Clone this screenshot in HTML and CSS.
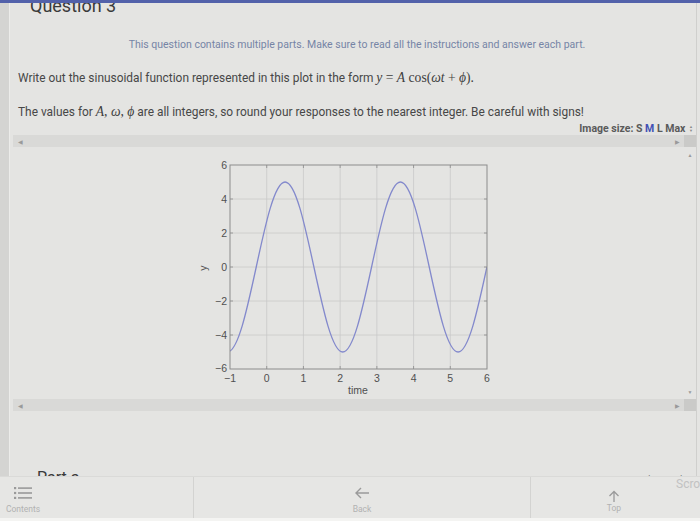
FILE: index.html
```html
<!DOCTYPE html>
<html>
<head>
<meta charset="utf-8">
<link rel="stylesheet" href="styles.css">
</head>
<body>
<div class="screen">
  <div class="topbar"></div>
  <div class="page">
    <div class="leftstrip"></div>
    <div class="main">
      <h1 class="qtitle">Question 3</h1>
      <p class="note">This question contains multiple parts. Make sure to read all the instructions and answer each part.</p>
      <p class="text t1">Write out the sinusoidal function represented in this plot in the form <span class="math"><i>y</i> = <i>A</i> cos(<i>ωt</i> + <i>ϕ</i>).</span></p>
      <p class="text t2">The values for <span class="math"><i>A</i>, <i>ω</i>, <i>ϕ</i></span> are all integers, so round your responses to the nearest integer. Be careful with signs!</p>
      <div class="imgsize">Image size: <b>S</b> <b class="cur">M</b> <b>L</b> <b>Max</b> <span class="spin"><span>▲</span><span>▼</span></span></div>
      <div class="hscroll"><span class="arr">◀</span><span class="track"></span><span class="arr">▶</span><span class="corner"></span></div>
      <div class="figbox">
        <div class="figarea">
          <svg class="plot" width="320" height="248" viewBox="0 0 320 248">
            <defs><clipPath id="clip"><rect x="50" y="15" width="257" height="204"/></clipPath></defs>
            <g class="grid">
              <line x1="86.71" y1="15" x2="86.71" y2="219"/>
              <line x1="123.43" y1="15" x2="123.43" y2="219"/>
              <line x1="160.14" y1="15" x2="160.14" y2="219"/>
              <line x1="196.86" y1="15" x2="196.86" y2="219"/>
              <line x1="233.57" y1="15" x2="233.57" y2="219"/>
              <line x1="270.29" y1="15" x2="270.29" y2="219"/>
              <line x1="50" y1="49" x2="307" y2="49"/>
              <line x1="50" y1="83" x2="307" y2="83"/>
              <line x1="50" y1="117" x2="307" y2="117"/>
              <line x1="50" y1="151" x2="307" y2="151"/>
              <line x1="50" y1="185" x2="307" y2="185"/>
            </g>
            <path class="curve" clip-path="url(#clip)" d="M47.4,202 c10.436,0 19.431,-41.45 28.835,-85 c9.404,-43.55 18.399,-85 28.835,-85 c10.436,0 19.431,41.45 28.835,85 c9.404,43.55 18.399,85 28.835,85 c10.436,0 19.431,-41.45 28.835,-85 c9.404,-43.55 18.399,-85 28.835,-85 c10.436,0 19.431,41.45 28.835,85 c9.404,43.55 18.399,85 28.835,85 c10.436,0 19.431,-41.45 28.835,-85"/>
            <g class="ticks">
              <path d="M86.71,219v-3M123.43,219v-3M160.14,219v-3M196.86,219v-3M233.57,219v-3M270.29,219v-3M86.71,15v3M123.43,15v3M160.14,15v3M196.86,15v3M233.57,15v3M270.29,15v3M50,49h3M50,83h3M50,117h3M50,151h3M50,185h3M307,49h-3M307,83h-3M307,117h-3M307,151h-3M307,185h-3"/>
            </g>
            <rect class="box" x="50" y="15" width="257" height="204"/>
            <g class="ylab">
              <text x="47" y="19">6</text>
              <text x="47" y="53">4</text>
              <text x="47" y="87">2</text>
              <text x="47" y="121">0</text>
              <text x="47" y="155">−2</text>
              <text x="47" y="189">−4</text>
              <text x="47" y="222">−6</text>
            </g>
            <g class="xlab">
              <text x="50" y="232">−1</text>
              <text x="86.71" y="232">0</text>
              <text x="123.43" y="232">1</text>
              <text x="160.14" y="232">2</text>
              <text x="196.86" y="232">3</text>
              <text x="233.57" y="232">4</text>
              <text x="270.29" y="232">5</text>
              <text x="307" y="232">6</text>
              <text x="178" y="244">time</text>
            </g>
            <text class="yname" x="0" y="0" transform="translate(27,118) rotate(-90)">y</text>
          </svg>
        </div>
        <div class="vscroll"><span>▲</span><span>▼</span></div>
      </div>
      <div class="hscroll"><span class="arr">◀</span><span class="track"></span><span class="arr">▶</span><span class="corner"></span></div>
      <div class="part"><span class="ptitle">Part a</span><span class="points">(1 point)</span></div>
    </div>
  </div>
  <div class="toolbar">
    <div class="tsec tleft">
      <div class="titem">
        <svg class="ico" width="18" height="12" viewBox="0 0 18 12">
          <rect x="0" y="0" width="2.2" height="2.2"/><rect x="4" y="0.3" width="14" height="1.6"/>
          <rect x="0" y="4.9" width="2.2" height="2.2"/><rect x="4" y="5.2" width="14" height="1.6"/>
          <rect x="0" y="9.8" width="2.2" height="2.2"/><rect x="4" y="10.1" width="14" height="1.6"/>
        </svg>
        <span class="tlabel">Contents</span>
      </div>
    </div>
    <div class="tsec tmid">
      <div class="titem">
        <svg class="ico" width="16" height="12" viewBox="0 0 16 12"><path d="M15,6H2M7,1L2,6L7,11" fill="none" stroke="#9a9a9a" stroke-width="1.4"/></svg>
        <span class="tlabel">Back</span>
      </div>
    </div>
    <div class="tsec tright">
      <div class="titem titop">
        <svg class="ico" width="12" height="12" viewBox="0 0 12 12"><path d="M6,12V1.5M1.5,6L6,1.5L10.5,6" fill="none" stroke="#9a9a9a" stroke-width="1.3"/></svg>
        <span class="tlabel">Top</span>
      </div>
    </div>
    <span class="scrol">Scrol</span>
  </div>
</div>
</body>
</html>
```
FILE: styles.css
```css
html, body {
  margin: 0;
  padding: 0;
  background: #f4f4f2;
}
body {
  font-family: Roboto, "Liberation Sans", sans-serif;
  width: 700px;
  height: 521px;
  overflow: hidden;
}
.screen {
  position: relative;
  width: 700px;
  height: 518px;
  overflow: hidden;
  background: #e4e4e2;
}
.topbar {
  position: absolute;
  top: 0;
  left: 0;
  right: 0;
  height: 3px;
  background: #5261aa;
  z-index: 2;
}
.page {
  display: flex;
  height: 518px;
}
.leftstrip {
  width: 9px;
  flex: none;
  background: #d4d4d2;
  border-right: 1px solid #ececea;
}
.main {
  width: 686px;
  flex: none;
  border-right: 1px solid #cfcfcd;
  display: flex;
  flex-direction: column;
}
.qtitle {
  margin: -3px 0 0 20px;
  font-size: 18px;
  line-height: 18px;
  height: 18px;
  font-weight: 400;
  color: #3a3a3a;
}
.note {
  margin: 23px 0 0 0;
  padding-left: 8px;
  font-size: 10.5px;
  line-height: 14px;
  height: 14px;
  text-align: center;
  color: #7684a6;
  white-space: nowrap;
}
.text {
  margin: 18px 0 0 0;
  padding-left: 8px;
  font-size: 11.9px;
  line-height: 16px;
  height: 16px;
  color: #474747;
  white-space: nowrap;
}
.math {
  font-family: "Liberation Serif", serif;
  font-size: 13.6px;
  color: #3e3e3e;
}
.imgsize {
  margin-top: 3px;
  height: 12px;
  line-height: 12px;
  padding-right: 3px;
  text-align: right;
  font-size: 10.5px;
  font-weight: 700;
  color: #5a5a5a;
  white-space: nowrap;
}
.imgsize b { font-weight: 700; }
.imgsize .cur { color: #4250b4; }
.spin {
  display: inline-flex;
  flex-direction: column;
  vertical-align: middle;
  font-size: 4px;
  line-height: 4px;
  color: #8a8a8a;
  margin-left: 1px;
}
.hscroll {
  margin-left: 3px;
  height: 12px;
  display: flex;
  align-items: center;
  background: #d9d9d7;
}
.hscroll .arr {
  font-size: 6px;
  color: #9a9a9a;
  width: 14px;
  text-align: center;
}
.hscroll .track { flex: 1; }
.hscroll .corner {
  width: 12px;
  height: 12px;
  background: #cacac8;
}
.figbox {
  margin-left: 3px;
  height: 252px;
  display: flex;
}
.figarea {
  flex: 1;
  padding: 3px 0 0 167px;
}
.plot { display: block; }
.grid line { stroke: #c9c9c9; stroke-width: 0.8; }
.curve { fill: none; stroke: #8389cc; stroke-width: 1.3; }
.ticks path { stroke: #8a8a8a; stroke-width: 0.8; fill: none; }
.box { fill: none; stroke: #8c8c8c; stroke-width: 1; }
.ylab text, .xlab text, .yname {
  font-family: "Liberation Sans", Arial, sans-serif;
  font-size: 10.5px;
  fill: #505050;
}
.ylab text { text-anchor: end; }
.xlab text { text-anchor: middle; }
.yname { text-anchor: middle; }
.vscroll {
  width: 12px;
  display: flex;
  flex-direction: column;
  justify-content: space-between;
  align-items: center;
  padding: 5px 0 4px 0;
  font-size: 5px;
  color: #9a9a9a;
}
.part {
  margin-top: 59px;
  display: flex;
  justify-content: space-between;
  align-items: flex-start;
  padding: 0 12px 0 27px;
}
.ptitle {
  font-size: 16px;
  line-height: 16px;
  color: #3a3a3a;
}
.points {
  margin-top: 5px;
  font-size: 10px;
  line-height: 12px;
  color: #555;
}
.toolbar {
  position: absolute;
  left: 0;
  right: 0;
  bottom: 0;
  height: 41px;
  display: flex;
  background: #e6e6e4;
  border-top: 1px solid #dadad8;
  z-index: 3;
}
.tsec {
  display: flex;
  justify-content: center;
  padding-top: 10px;
}
.tleft {
  width: 193px;
  justify-content: flex-start;
  padding-left: 5px;
  box-sizing: border-box;
}
.tmid {
  width: 336px;
  border-left: 1px solid #d3d3d1;
  border-right: 1px solid #d3d3d1;
}
.tright {
  width: 166px;
}
.titem {
  display: flex;
  flex-direction: column;
  align-items: center;
  width: 36px;
}
.titop { padding-top: 3px; }
.ico { display: block; fill: #9a9a9a; }
.tlabel {
  margin-top: 5px;
  font-size: 8.5px;
  line-height: 10px;
  color: #b2b2b2;
}
.titop .tlabel { margin-top: 1px; }
.scrol {
  position: absolute;
  left: 676px;
  top: 0;
  font-size: 12px;
  line-height: 14px;
  color: #c2c2c2;
  white-space: nowrap;
}
```
